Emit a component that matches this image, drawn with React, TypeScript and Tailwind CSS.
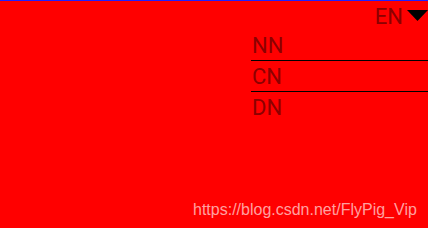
import React from "react";

export default function App() {
  const items = ["NN", "CN", "DN"];
  return (
    <div
      className="relative w-[428px] h-[228px] bg-[#ff0000] border-t border-[#2020ff] overflow-hidden"
      style={{ fontFamily: "Roboto, 'Liberation Sans', sans-serif" }}
    >
      <div className="flex justify-end items-center h-[29px] pt-[1px]">
        <span className="text-[22px] leading-[29px] text-[#8c0000]">EN</span>
        <svg width="21" height="11" viewBox="0 0 21 11" className="ml-[4px] mb-[2px]">
          <polygon points="0,0 21,0 10.5,11" fill="#000" />
        </svg>
      </div>
      <div className="ml-[251px] flex flex-col">
        {items.map((t, i) => (
          <div
            key={t}
            className={`h-[31px] pl-[1px] text-[22px] leading-[31px] text-[#8c0000] ${
              i < items.length - 1 ? "border-b border-black" : ""
            }`}
          >
            {t}
          </div>
        ))}
      </div>
      <div
        className="absolute left-[193px] top-[197px] text-[16px] text-[#ffa0a0]"
        style={{ fontFamily: "'Liberation Sans', Arial, sans-serif" }}
      >
        https://blog.csdn.net/FlyPig_Vip
      </div>
    </div>
  );
}
